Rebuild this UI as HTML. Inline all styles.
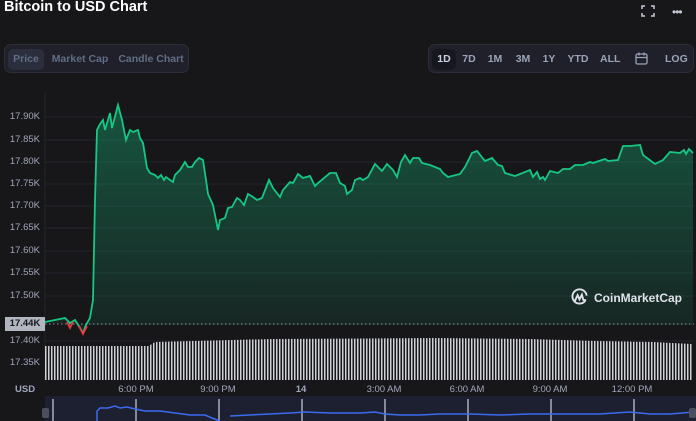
<!DOCTYPE html>
<html><head><meta charset="utf-8"><style>
*{margin:0;padding:0;box-sizing:border-box}
body{width:696px;height:421px;background:#17171a;font-family:"Liberation Sans",sans-serif;position:relative;overflow:hidden;color:#a1a7bb}
.t{position:absolute;left:4px;top:-1px;font-size:14.5px;font-weight:bold;color:#fff}
.box{position:absolute;top:44px;height:29px;background:#1f2029;border:1px solid #2b2e3b;border-radius:7px}
.b{position:absolute;top:4px;height:21px;line-height:21px;font-size:10.5px;font-weight:bold;color:#616e85;text-align:center}
.yl{position:absolute;left:7px;font-size:9.5px;color:#a1a7bb;width:33px;text-align:right}
.xl{position:absolute;top:384px;font-size:9.5px;color:#a1a7bb;transform:translateX(-50%)}
</style></head><body>
<div class="t">Bitcoin to USD Chart</div>
<svg style="position:absolute;left:640px;top:4px" width="16" height="14" viewBox="0 0 16 14" fill="none" stroke="#c7cbd6" stroke-width="1.5"><path d="M2 5V2h3M11 2h3v3M14 9v3h-3M5 12H2V9"/></svg>
<div style="position:absolute;left:672px;top:5px;color:#c7cbd6;font-size:12px;letter-spacing:-1px">•••</div>
<div class="box" style="left:4px;width:185px">
<div class="b" style="left:3px;width:36px;background:#2b2e3d;border-radius:5px">Price</div>
<div class="b" style="left:45px;width:60px">Market Cap</div>
<div class="b" style="left:113px;width:66px">Candle Chart</div>
</div>
<div class="box" style="left:428px;width:266px">
<div class="b" style="left:3px;width:24px;background:#17181f;border-radius:5px;color:#c9d0e0">1D</div>
<div class="b" style="left:32px;width:16px;color:#9aa3b8">7D</div>
<div class="b" style="left:58px;width:16px;color:#9aa3b8">1M</div>
<div class="b" style="left:86px;width:16px;color:#9aa3b8">3M</div>
<div class="b" style="left:113px;width:14px;color:#9aa3b8">1Y</div>
<div class="b" style="left:138px;width:22px;color:#9aa3b8">YTD</div>
<div class="b" style="left:171px;width:20px;color:#9aa3b8">ALL</div>
<svg style="position:absolute;left:206px;top:7px" width="13" height="13" viewBox="0 0 13 13" fill="none" stroke="#9aa3b8" stroke-width="1.3"><rect x="1" y="2" width="11" height="10" rx="1.5"/><path d="M1 5.5h11M4 0.5v3M9 0.5v3"/></svg>
<div class="b" style="left:236px;width:22px;color:#9aa3b8">LOG</div>
</div>
<svg style="position:absolute;left:0;top:0" width="696" height="421">
<defs><linearGradient id="g" x1="0" y1="0" x2="0" y2="1"><stop offset="0" stop-color="#16c784" stop-opacity="0.35"/><stop offset="1" stop-color="#16c784" stop-opacity="0.08"/></linearGradient></defs>
<g stroke="#22252e" stroke-width="1">
<line x1="45" y1="117" x2="694" y2="117"/><line x1="45" y1="140" x2="694" y2="140"/><line x1="45" y1="162" x2="694" y2="162"/><line x1="45" y1="184" x2="694" y2="184"/><line x1="45" y1="206" x2="694" y2="206"/><line x1="45" y1="228" x2="694" y2="228"/><line x1="45" y1="251" x2="694" y2="251"/><line x1="45" y1="273" x2="694" y2="273"/><line x1="45" y1="296" x2="694" y2="296"/><line x1="45" y1="341" x2="694" y2="341"/>
<line x1="45" y1="92" x2="45" y2="380"/>
</g>
<path id="p" d="M45,322 L50,321 55,320 60,319 65,318 70,323 75,320 80,328 83,333 86,325 90,318 93,300 95,200 97,130 100,124 103,120 105,130 110,113 112,128 118,105 122,120 126,140 130,130 133,132 138,130 140,138 143,143 147,168 150,173 155,175 158,178 161,175 164,180 166,177 170,180 173,182 175,175 180,170 185,162 188,167 192,167 195,162 199,158 203,160 206,180 208,194 213,205 216,220 218,230 220,220 225,218 228,208 232,207 237,198 240,200 244,205 248,194 253,197 257,200 262,198 269,180 273,188 280,197 283,190 290,182 293,183 298,174 303,178 310,176 315,186 318,183 330,173 336,173 340,183 345,186 347,194 352,190 355,180 360,178 363,180 368,177 375,164 382,171 387,164 393,170 397,177 401,162 405,155 410,163 413,158 419,158 422,163 430,165 435,167 440,169 443,173 448,177 460,174 465,167 472,153 477,151 485,161 492,158 498,165 502,166 505,173 515,176 530,170 533,177 537,172 540,179 543,177 545,180 550,171 558,173 563,169 570,169 575,165 583,165 590,162 593,163 605,159 608,161 618,160 623,146 630,146 640,145 643,155 655,164 663,160 670,152 680,153 684,150 686,154 689,149 693,153" fill="none"/>
<path d="M45,322 L50,321 55,320 60,319 65,318 70,323 75,320 80,328 83,333 86,325 90,318 93,300 95,200 97,130 100,124 103,120 105,130 110,113 112,128 118,105 122,120 126,140 130,130 133,132 138,130 140,138 143,143 147,168 150,173 155,175 158,178 161,175 164,180 166,177 170,180 173,182 175,175 180,170 185,162 188,167 192,167 195,162 199,158 203,160 206,180 208,194 213,205 216,220 218,230 220,220 225,218 228,208 232,207 237,198 240,200 244,205 248,194 253,197 257,200 262,198 269,180 273,188 280,197 283,190 290,182 293,183 298,174 303,178 310,176 315,186 318,183 330,173 336,173 340,183 345,186 347,194 352,190 355,180 360,178 363,180 368,177 375,164 382,171 387,164 393,170 397,177 401,162 405,155 410,163 413,158 419,158 422,163 430,165 435,167 440,169 443,173 448,177 460,174 465,167 472,153 477,151 485,161 492,158 498,165 502,166 505,173 515,176 530,170 533,177 537,172 540,179 543,177 545,180 550,171 558,173 563,169 570,169 575,165 583,165 590,162 593,163 605,159 608,161 618,160 623,146 630,146 640,145 643,155 655,164 663,160 670,152 680,153 684,150 686,154 689,149 693,153 L693,325 L90,325 Z" fill="url(#g)"/>
<use href="#p" stroke="#16c784" stroke-width="1.8"/>
<path d="M67,322 L70,328 73,322 M79,326 L83,334 87,326" stroke="#ea3943" stroke-width="1.8" fill="none"/>
<line x1="45" y1="324" x2="694" y2="324" stroke="#8a8f9c" stroke-width="1" stroke-dasharray="1.5 2.5"/>
</svg>
<div style="position:absolute;left:45px;top:336px;width:647px;height:44px;background:repeating-linear-gradient(90deg,#cfd0d6 0 1.4px,transparent 1.4px 3px);clip-path:polygon(0 10px,16% 10px,17% 6px,23% 5px,35% 3px,60% 2px,75% 3px,85% 5px,94% 6px,100% 8px,100% 100%,0 100%)"></div>
<div class="yl" style="top:111px">17.90K</div><div class="yl" style="top:134px">17.85K</div><div class="yl" style="top:156px">17.80K</div><div class="yl" style="top:178px">17.75K</div><div class="yl" style="top:200px">17.70K</div><div class="yl" style="top:222px">17.65K</div><div class="yl" style="top:245px">17.60K</div><div class="yl" style="top:267px">17.55K</div><div class="yl" style="top:290px">17.50K</div><div class="yl" style="top:335px">17.40K</div><div class="yl" style="top:357px">17.35K</div>
<div style="position:absolute;left:5px;top:317px;width:40px;height:14px;background:#b1b5bf;color:#17171a;font-size:9.5px;font-weight:bold;line-height:14px;text-align:center">17.44K</div>
<div style="position:absolute;left:15px;top:384px;font-size:9.5px;font-weight:bold;color:#a1a7bb">USD</div>
<div class="xl" style="left:136px">6:00 PM</div><div class="xl" style="left:218px">9:00 PM</div><div class="xl" style="left:301px;font-weight:bold">14</div><div class="xl" style="left:384px">3:00 AM</div><div class="xl" style="left:467px">6:00 AM</div><div class="xl" style="left:550px">9:00 AM</div><div class="xl" style="left:632px">12:00 PM</div>
<div style="position:absolute;left:570px;top:288px;display:flex;align-items:center;color:#dfe2ea;font-size:12px;font-weight:bold">
<svg width="19" height="19" viewBox="0 0 20 20" fill="none" stroke="#dfe2ea" stroke-width="2"><path d="M16 13.5A7.5 7.5 0 1 1 17.5 8"/><path d="M5 14L8 7.5 10 12 12.5 7 14 12.5 17 13"/></svg>
<span style="margin-left:5px">CoinMarketCap</span></div>
<svg style="position:absolute;left:0;top:396px" width="696" height="25">
<rect x="45" y="0" width="651" height="25" fill="#1c2030"/>
<g stroke="#d0d3dc" stroke-width="1.2"><line x1="53" y1="3" x2="53" y2="25"/><line x1="136" y1="3" x2="136" y2="25"/><line x1="219" y1="3" x2="219" y2="25"/><line x1="302" y1="3" x2="302" y2="25"/><line x1="385" y1="3" x2="385" y2="25"/><line x1="468" y1="3" x2="468" y2="25"/><line x1="551" y1="3" x2="551" y2="25"/><line x1="634" y1="3" x2="634" y2="25"/></g>
<path d="M97,25 L97,15 100,12 108,12 115,10 120,12 127,11 135,13 145,15 160,15 175,17 190,19 205,19 212,22 220,25 M230,20 L250,19 270,18 290,17 305,16 330,17 360,17 375,16 385,18 400,19 420,19 440,18 470,18 500,19 530,18 560,18 600,18 630,16 650,18 670,18 694,16" stroke="#3d6bf0" stroke-width="1.5" fill="none"/>
<rect x="42" y="12" width="7" height="10" rx="2" fill="#4a4f5e"/><rect x="689" y="12" width="7" height="10" rx="2" fill="#4a4f5e"/>
</svg>
</body></html>
